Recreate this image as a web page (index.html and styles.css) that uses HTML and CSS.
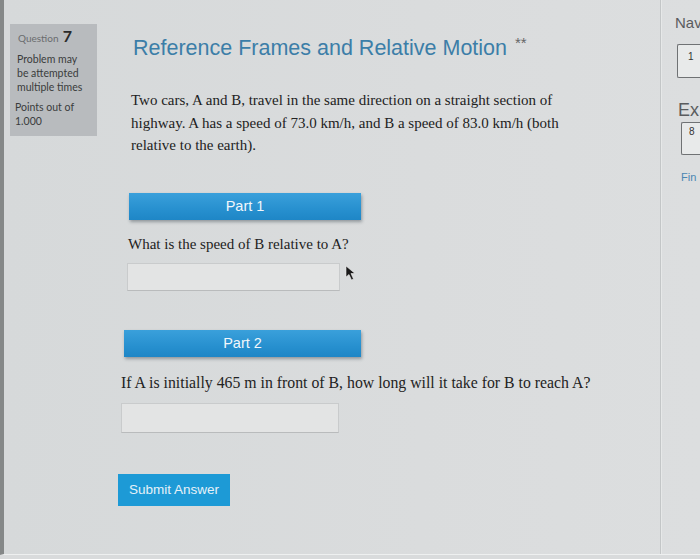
FILE: index.html
```html
<!DOCTYPE html>
<html>
<head>
<meta charset="utf-8">
<link rel="stylesheet" href="styles.css">
</head>
<body>
<div class="page">
  <aside class="sidebar">
    <div class="qbox">
      <div class="qnum"><span class="qlabel">Question</span> <span class="qdigit">7</span></div>
      <div class="qinfo">Problem may<br>be attempted<br>multiple times</div>
      <div class="qpoints">Points out of<br>1.000</div>
    </div>
  </aside>
  <main class="main">
    <h1 class="title">Reference Frames and Relative Motion <span class="stars">**</span></h1>
    <p class="problem">Two cars, A and B, travel in the same direction on a straight section of highway. A has a speed of 73.0 km/h, and B a speed of 83.0 km/h (both relative to the earth).</p>
    <div class="part part1">Part 1</div>
    <p class="question q1">What is the speed of B relative to A?</p>
    <div class="answer-row">
      <div class="answer a1"></div>
      <svg class="cursor" width="12" height="16" viewBox="0 0 12 16"><path d="M1 1 L1 12 L4 9.5 L6.5 15 L8.5 14 L6 8.5 L10 8.5 Z" fill="#1a1a1a" stroke="#eee" stroke-width="0.6"/></svg>
    </div>
    <div class="part part2">Part 2</div>
    <p class="question q2">If A is initially 465 m in front of B, how long will it take for B to reach A?</p>
    <div class="answer a2"></div>
    <button class="submit">Submit Answer</button>
  </main>
  <div class="divider"></div>
  <nav class="nav">
    <div class="nav-title">Nav</div>
    <div class="nav-box box1">1</div>
    <div class="nav-ex">Ex</div>
    <div class="nav-box box8">8</div>
    <div class="nav-fin">Fin</div>
  </nav>
</div>
</body>
</html>
```

FILE: styles.css
```css
html, body {
  margin: 0;
  padding: 0;
  width: 700px;
  height: 559px;
  overflow: hidden;
  background: #d9dbdc;
}

.page {
  display: flex;
  height: 554px;
  border-left: 4px solid #858888;
  border-bottom: 1px solid #eef0f0;
  background: linear-gradient(90deg, #d6d9da 0%, #dadcdd 60%, #dcdedf 100%);
  font-family: "Liberation Sans", Arial, sans-serif;
}

.sidebar {
  width: 93px;
  flex: none;
  padding-top: 24px;
  padding-left: 6px;
  box-sizing: border-box;
}

.qbox {
  width: 87px;
  height: 112px;
  background: #b8bbbe;
  box-sizing: border-box;
  padding: 3px 0 0 7px;
  font-family: Lato, "Open Sans", sans-serif;
  color: #3a3b3c;
}

.qnum {
  line-height: 17px;
  margin-left: 1px;
}
.qlabel {
  font-size: 10px;
  color: #6a6c6e;
}
.qdigit {
  font-size: 16px;
  font-weight: bold;
  color: #2a2a2a;
}

.qinfo {
  margin-top: 5px;
  font-size: 10.5px;
  line-height: 14px;
}

.qpoints {
  margin-top: 6px;
  margin-left: -2px;
  font-size: 10.5px;
  line-height: 14px;
}

.main {
  flex: 1;
  display: flex;
  flex-direction: column;
  align-items: flex-start;
  padding-top: 37px;
  padding-left: 36px;
  box-sizing: border-box;
}

.title {
  margin: 0;
  font-weight: normal;
  font-size: 21.5px;
  line-height: 22px;
  color: #3c7ea8;
  white-space: nowrap;
}
.stars {
  font-size: 15px;
  line-height: 0;
  color: #666;
  vertical-align: 7px;
  margin-left: 2px;
}

.problem {
  margin: 30px 0 0 -2px;
  width: 450px;
  font-family: "Liberation Serif", "Times New Roman", serif;
  font-size: 15px;
  line-height: 22.5px;
  color: #222;
}

.part {
  height: 27px;
  line-height: 26px;
  text-align: center;
  color: #f2f7fb;
  font-size: 14.5px;
  background: linear-gradient(180deg, #3aa0db 0%, #2790cf 60%, #1e86c6 100%);
  box-shadow: 1px 2px 3px rgba(60, 70, 80, 0.45);
}

.part1 {
  width: 232px;
  margin: 36px 0 0 -4px;
}

.part2 {
  width: 237px;
  margin: 39px 0 0 -9px;
}

.question {
  margin: 0;
  font-family: "Liberation Serif", "Times New Roman", serif;
  line-height: 22px;
  color: #222;
  white-space: nowrap;
}
.q1 {
  font-size: 15px;
  margin: 13px 0 0 -5px;
}
.q2 {
  font-size: 15.8px;
  margin: 15px 0 0 -12px;
}

.answer-row {
  display: flex;
  align-items: flex-start;
  margin: 8px 0 0 -6px;
}

.answer {
  background: #e3e4e4;
  border: 1px solid #c9cbcc;
  border-bottom-color: #b9bbbc;
  box-sizing: border-box;
}
.a1 {
  width: 213px;
  height: 28px;
}
.cursor {
  margin: 2px 0 0 5px;
}
.a2 {
  width: 218px;
  height: 30px;
  margin: 9px 0 0 -12px;
}

.submit {
  margin: 41px 0 0 -15px;
  width: 112px;
  height: 32px;
  border: none;
  background: #1d9ad6;
  color: #e6f1f8;
  font-family: "Liberation Sans", Arial, sans-serif;
  font-size: 13.5px;
  padding: 0;
  text-align: center;
}

.divider {
  width: 1px;
  flex: none;
  background: #c3c6c7;
  border-right: 1px solid #e6e8e8;
}

.nav {
  width: 38px;
  flex: none;
  padding-left: 13px;
  box-sizing: border-box;
  overflow: hidden;
  font-family: "Liberation Sans", Arial, sans-serif;
}

.nav-title {
  margin-top: 14px;
  font-size: 15px;
  line-height: 18px;
  color: #5a5c5e;
  white-space: nowrap;
}

.nav-box {
  border: 1px solid #6f7274;
  border-right: none;
  border-radius: 2px 0 0 2px;
  background: #e8eaea;
  font-size: 10px;
  color: #333;
  box-sizing: border-box;
  width: 40px;
}
.box1 {
  margin-top: 12px;
  margin-left: 2px;
  height: 34px;
  padding: 6px 0 0 10px;
}
.nav-ex {
  margin-top: 22px;
  margin-left: 3px;
  font-size: 18px;
  line-height: 20px;
  color: #5a5c5e;
  white-space: nowrap;
}
.box8 {
  margin-top: 2px;
  margin-left: 6px;
  height: 33px;
  padding: 3px 0 0 7px;
}
.nav-fin {
  margin-top: 16px;
  margin-left: 6px;
  font-size: 11px;
  color: #4a86b2;
  white-space: nowrap;
}
```
